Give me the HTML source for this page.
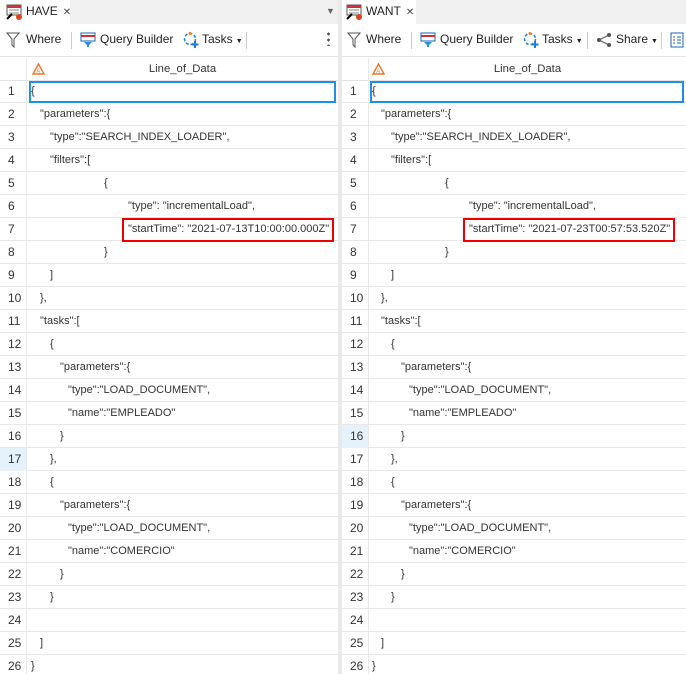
<!DOCTYPE html>
<html><head><meta charset="utf-8"><style>
*{box-sizing:border-box;margin:0;padding:0}
body{width:686px;height:674px;overflow:hidden;background:#e9e9e9;font-family:"Liberation Sans",sans-serif;font-size:11.3px;color:#333;position:relative}
.pane{position:absolute;top:0;height:674px;background:#fff;overflow:hidden}
.tabbar{position:absolute;left:0;top:0;right:0;height:24px;background:#f0f0f0}
.tab{position:absolute;left:0;top:0;height:24px;background:#fff;padding-left:26px;line-height:23px;font-size:12px;color:#222}
.tab .x{font-size:10px;margin-left:5px;color:#444}
.tb{position:absolute;top:24px;left:0;right:0;height:33px;border-bottom:1px solid #e2e2e2;font-size:12px;color:#222}
.tb span{position:absolute;top:8px}
.sep{position:absolute;top:8px;width:1px;height:17px;background:#ccc}
.hdr{position:absolute;top:58px;left:0;right:0;height:23px;border-bottom:1px solid #e2e2e2}
.row{position:absolute;left:0;right:0;height:23px;border-bottom:1px solid #e8e8e8;line-height:22px;white-space:pre}
.num{position:absolute;left:0;top:0;width:27px;height:23px;border-right:1px solid #e8e8e8;padding-left:8px;color:#333;font-size:12px}
.num.sel{background:#e5f1fb}
.txt{position:absolute;top:0;font-size:11px}
.box{position:absolute;border:2px solid #e00;}
.cur{position:absolute;border:2px solid #1e90e6}
</style></head><body>

<div class="pane" style="left:0;width:338px">
 <div class="tabbar"><div class="tab" style="width:70px">HAVE<span class="x">✕</span></div>
  <div style="position:absolute;left:326px;top:6px;font-size:9px;color:#666">▼</div></div>
 <svg style="position:absolute;left:6px;top:4px" width="17" height="16"><rect x="1" y="1" width="14" height="10" fill="#fff" stroke="#555"/><rect x="1" y="1" width="14" height="3" fill="#c33"/><path d="M3 6h10M3 9h10" stroke="#888"/><path d="M1 15l5-5" stroke="#000" stroke-width="2"/><circle cx="13" cy="13" r="3" fill="#e04020"/></svg>
 <div class="tb">
  <svg style="position:absolute;left:6px;top:8px" width="14" height="16"><path d="M1 1h12l-5 6v8l-2-2V7z" fill="none" stroke="#555"/></svg>
  <span style="left:26px">Where</span>
  <div class="sep" style="left:71px"></div>
  <svg style="position:absolute;left:80px;top:8px" width="16" height="16"><rect x="1" y="1" width="14" height="8" fill="none" stroke="#1b63b0"/><path d="M1 4h14" stroke="#c33" stroke-width="2"/><path d="M4 10h8l-3 3v2h-2v-2z" fill="#2a8ee0"/></svg>
  <span style="left:100px">Query Builder</span>
  <svg style="position:absolute;left:182px;top:7px" width="18" height="18"><circle cx="8" cy="8" r="5.5" fill="none" stroke="#1b7fd8" stroke-dasharray="3 2" stroke-width="1.5"/><path d="M13 10v7M9.5 13.5h7" stroke="#1b7fd8" stroke-width="2"/><circle cx="8" cy="2.5" r="1.5" fill="#f08020"/></svg>
  <span style="left:202px">Tasks<span style="font-size:7px;position:static;margin-left:3px">▼</span></span>
  <div class="sep" style="left:246px"></div>
  <div style="position:absolute;left:327px;top:7px;width:3px;height:15px;background:radial-gradient(circle,#555 1.3px,transparent 1.5px) 0 0/3px 6px"></div>
 </div>
 <div class="hdr"><div class="num" style="height:22px"></div>
  <svg style="position:absolute;left:32px;top:5px" width="13" height="12"><path d="M6.5 1L12 11H1z" fill="none" stroke="#e8762a" stroke-width="1.4"/><text x="4.3" y="10" font-size="6" fill="#e8762a" font-family="Liberation Sans">A</text></svg>
  <div style="position:absolute;left:27px;right:0;text-align:center;line-height:22px">Line_of_Data</div></div>
 <div id="L"></div>
</div>

<div class="pane" style="left:342px;width:344px">
 <div class="tabbar"><div class="tab" style="width:74px;padding-left:24px">WANT<span class="x">✕</span></div></div>
 <svg style="position:absolute;left:4px;top:4px" width="17" height="16"><rect x="1" y="1" width="14" height="10" fill="#fff" stroke="#555"/><rect x="1" y="1" width="14" height="3" fill="#c33"/><path d="M3 6h10M3 9h10" stroke="#888"/><path d="M1 15l5-5" stroke="#000" stroke-width="2"/><circle cx="13" cy="13" r="3" fill="#e04020"/></svg>
 <div class="tb">
  <svg style="position:absolute;left:5px;top:8px" width="14" height="16"><path d="M1 1h12l-5 6v8l-2-2V7z" fill="none" stroke="#555"/></svg>
  <span style="left:24px">Where</span>
  <div class="sep" style="left:69px"></div>
  <svg style="position:absolute;left:78px;top:8px" width="16" height="16"><rect x="1" y="1" width="14" height="8" fill="none" stroke="#1b63b0"/><path d="M1 4h14" stroke="#c33" stroke-width="2"/><path d="M4 10h8l-3 3v2h-2v-2z" fill="#2a8ee0"/></svg>
  <span style="left:98px">Query Builder</span>
  <svg style="position:absolute;left:180px;top:7px" width="18" height="18"><circle cx="8" cy="8" r="5.5" fill="none" stroke="#1b7fd8" stroke-dasharray="3 2" stroke-width="1.5"/><path d="M13 10v7M9.5 13.5h7" stroke="#1b7fd8" stroke-width="2"/><circle cx="8" cy="2.5" r="1.5" fill="#f08020"/></svg>
  <span style="left:200px">Tasks<span style="font-size:7px;position:static;margin-left:3px">▼</span></span>
  <div class="sep" style="left:245px"></div>
  <svg style="position:absolute;left:254px;top:8px" width="16" height="16"><circle cx="3" cy="8" r="2" fill="#555"/><circle cx="13" cy="3" r="2" fill="#555"/><circle cx="13" cy="13" r="2" fill="#555"/><path d="M3 8L13 3M3 8l10 5" stroke="#555"/></svg>
  <span style="left:274px">Share<span style="font-size:7px;position:static;margin-left:3px">▼</span></span>
  <div class="sep" style="left:319px"></div>
  <svg style="position:absolute;left:328px;top:8px" width="14" height="16"><rect x="1" y="1" width="12" height="14" fill="none" stroke="#1b63b0"/><path d="M3 5h2M7 5h4M3 8h2M7 8h4M3 11h2M7 11h4" stroke="#1b63b0"/></svg>
 </div>
 <div class="hdr"><div class="num" style="height:22px"></div>
  <svg style="position:absolute;left:30px;top:5px" width="13" height="12"><path d="M6.5 1L12 11H1z" fill="none" stroke="#e8762a" stroke-width="1.4"/><text x="4.3" y="10" font-size="6" fill="#e8762a" font-family="Liberation Sans">A</text></svg>
  <div style="position:absolute;left:27px;right:0;text-align:center;line-height:22px">Line_of_Data</div></div>
 <div id="R"></div>
</div>

<script>
var rows=[[31,"{"],[40,'"parameters":{'],[50,'"type":"SEARCH_INDEX_LOADER",'],[50,'"filters":['],[104,"{"],[128,'"type": "incrementalLoad",'],[128,'"startTime": "@@"'],[104,"}"],[50,"]"],[40,"},"],[40,'"tasks":['],[50,"{"],[60,'"parameters":{'],[68,'"type":"LOAD_DOCUMENT",'],[68,'"name":"EMPLEADO"'],[60,"}"],[50,"},"],[50,"{"],[60,'"parameters":{'],[68,'"type":"LOAD_DOCUMENT",'],[68,'"name":"COMERCIO"'],[60,"}"],[50,"}"],[0,""],[40,"]"],[31,"}"]];
function build(id,off,st,sel){var h="";rows.forEach(function(r,i){var t=r[1].replace("@@",st);h+='<div class="row" style="top:'+(80+i*23)+'px"><div class="num'+(i+1==sel?' sel':'')+'">'+(i+1)+'</div><div class="txt" style="left:'+(r[0]+off)+'px">'+t+'</div></div>';});
h+='<div class="cur" style="left:'+(29+off)+'px;top:81px;right:2px;height:22px"></div>';
h+='<div class="box" style="left:'+(122+off)+'px;top:218px;width:212px;height:24px"></div>';
document.getElementById(id).innerHTML=h;}
build("L",0,"2021-07-13T10:00:00.000Z",17);
build("R",-1,"2021-07-23T00:57:53.520Z",16);
</script>
</body></html>
